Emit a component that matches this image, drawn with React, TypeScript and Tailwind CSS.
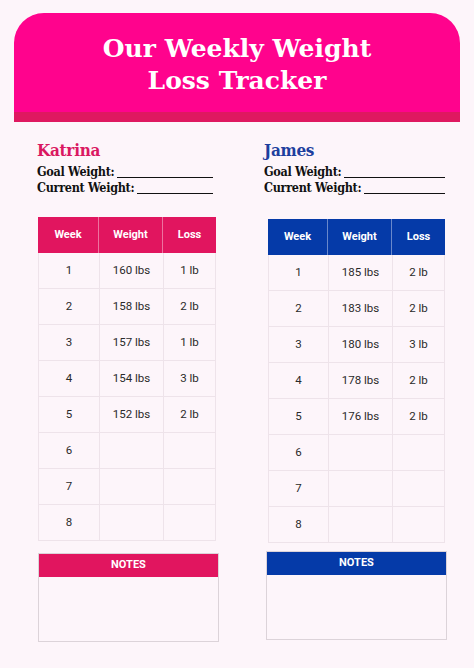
import React from "react";

type Row = { week: number; weight?: string; loss?: string };

const KATRINA: Row[] = [
  { week: 1, weight: "160 lbs", loss: "1 lb" },
  { week: 2, weight: "158 lbs", loss: "2 lb" },
  { week: 3, weight: "157 lbs", loss: "1 lb" },
  { week: 4, weight: "154 lbs", loss: "3 lb" },
  { week: 5, weight: "152 lbs", loss: "2 lb" },
  { week: 6 },
  { week: 7 },
  { week: 8 },
];

const JAMES: Row[] = [
  { week: 1, weight: "185 lbs", loss: "2 lb" },
  { week: 2, weight: "183 lbs", loss: "2 lb" },
  { week: 3, weight: "180 lbs", loss: "3 lb" },
  { week: 4, weight: "178 lbs", loss: "2 lb" },
  { week: 5, weight: "176 lbs", loss: "2 lb" },
  { week: 6 },
  { week: 7 },
  { week: 8 },
];

const serif = "font-['DejaVu_Serif',serif]";
const sans = "font-['Roboto','Liberation_Sans',sans-serif]";

function Field({ label }: { label: string }) {
  return (
    <div className={`flex items-end text-[12.5px] leading-[16px] font-bold text-[#111] font-stretch-condensed tracking-[-0.3px] ${serif}`}>
      <span className="whitespace-nowrap">{label}</span>
      <span className="ml-[3px] mb-[2px] flex-1 border-b-[1.5px] border-[#111]" />
    </div>
  );
}

function Tracker({
  name,
  rows,
  nameColor,
  headColor,
  cols,
  fieldsClass,
  tableClass,
  notesClass,
}: {
  name: string;
  rows: Row[];
  nameColor: string;
  headColor: string;
  cols: string;
  fieldsClass: string;
  tableClass: string;
  notesClass: string;
}) {
  return (
    <div className="flex flex-col">
      <h2 className={`text-[17px] leading-[22px] font-bold font-stretch-condensed tracking-[-0.3px] ${serif} ${nameColor}`}>{name}</h2>
      <div className={`mt-[3px] ${fieldsClass}`}>
        <Field label="Goal Weight:" />
        <Field label="Current Weight:" />
      </div>

      <div className={`${tableClass} ${sans} text-[11.5px]`}>
        <div className={`grid ${cols} h-[36px] ${headColor} text-white font-bold text-[11px]`}>
          <div className="flex items-center justify-center">Week</div>
          <div className="flex items-center justify-center border-l border-white/40">Weight</div>
          <div className="flex items-center justify-center border-l border-white/40">Loss</div>
        </div>
        <div className="border-x border-[#eee3ea]">
          {rows.map((r) => (
            <div key={r.week} className={`grid ${cols} h-[36px] border-b border-[#eee3ea] text-[#2a2a2a]`}>
              <div className="flex items-center justify-center">{r.week}</div>
              <div className="flex items-center justify-center border-l border-[#eee3ea]">{r.weight}</div>
              <div className="flex items-center justify-center border-l border-[#eee3ea]">{r.loss}</div>
            </div>
          ))}
        </div>
      </div>

      <div className={`${notesClass} border border-[#dcd3d9]`}>
        <div className={`h-[23px] flex items-center justify-center ${headColor} text-white text-[11px] font-bold ${sans}`}>
          NOTES
        </div>
        <div className="h-[64px]" />
      </div>
    </div>
  );
}

export default function App() {
  return (
    <div className="w-[474px] min-h-[668px] bg-[#fdf5fa] pt-[13px]">
      <header className="mx-[14px] h-[109px] rounded-t-[30px] bg-[#ff038d] border-b-[10px] border-[#df1860] flex items-center justify-center">
        <h1 className={`text-center text-white font-bold text-[25px] leading-[32px] ${serif} mt-[5px]`}>
          Our Weekly Weight
          <br />
          Loss Tracker
        </h1>
      </header>

      <div className="flex pl-[37px] pt-[17px]">
        <div className="w-[182px]">
          <Tracker
            name="Katrina"
            rows={KATRINA}
            nameColor="text-[#da1862]"
            headColor="bg-[#e1155f]"
            cols="grid-cols-[60px_64px_1fr]"
            fieldsClass="w-[176px]"
            tableClass="ml-[1px] w-[178px] mt-[21px]"
            notesClass="ml-[1px] w-[181px] mt-[12px]"
          />
        </div>
        <div className="w-[183px] ml-[45px]">
          <Tracker
            name="James"
            rows={JAMES}
            nameColor="text-[#1d3f9e]"
            headColor="bg-[#053aa8]"
            cols="grid-cols-[59px_64px_1fr]"
            fieldsClass="w-[181px]"
            tableClass="ml-[4px] w-[177px] mt-[23px]"
            notesClass="ml-[2px] w-[181px] mt-[8px]"
          />
        </div>
      </div>
    </div>
  );
}
